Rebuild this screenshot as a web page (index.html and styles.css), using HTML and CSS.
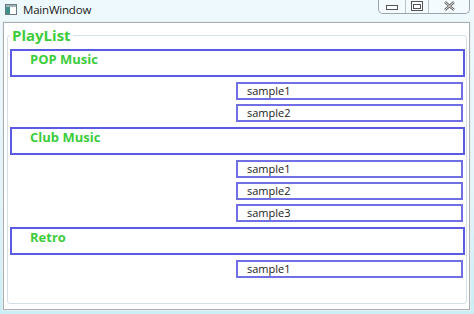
FILE: index.html
```html
<!DOCTYPE html>
<html>
<head>
<meta charset="utf-8">
<link rel="stylesheet" href="styles.css">
</head>
<body>
<div class="window">
  <div class="titlebar">
    <svg class="app-icon" width="12" height="11" viewBox="0 0 12 11">
      <rect x="0.5" y="0.5" width="11" height="10" fill="#fff" stroke="#6c7a80"/>
      <rect x="1" y="1" width="4" height="9" fill="#3f8f8a"/>
      <rect x="1" y="1" width="10" height="2" fill="#9fb4bd"/>
    </svg>
    <span class="title">MainWindow</span>
    <div class="caption-buttons">
      <div class="cb cb-min"><svg width="12" height="6" viewBox="0 0 12 6"><rect x="0.5" y="0.5" width="11" height="4" fill="#fff" stroke="#555"/></svg></div>
      <div class="cb cb-max"><svg width="12" height="10" viewBox="0 0 12 10"><rect x="0.5" y="0.5" width="11" height="9" fill="#fff" stroke="#555"/><rect x="2.5" y="3.5" width="7" height="4" fill="#fff" stroke="#555"/></svg></div>
      <div class="cb cb-close"><svg width="11" height="10" viewBox="0 0 11 10"><path d="M1 1 L10 9 M10 1 L1 9" stroke="#666" stroke-width="2.4" fill="none"/><path d="M1 1 L10 9 M10 1 L1 9" stroke="#fff" stroke-width="0.8" fill="none"/></svg></div>
    </div>
  </div>
  <div class="client">
    <fieldset class="group">
      <legend class="group-title">PlayList</legend>
      <div class="category">
        <div class="cat-header">POP Music</div>
        <div class="sample">sample1</div>
        <div class="sample">sample2</div>
      </div>
      <div class="category">
        <div class="cat-header">Club Music</div>
        <div class="sample">sample1</div>
        <div class="sample">sample2</div>
        <div class="sample">sample3</div>
      </div>
      <div class="category">
        <div class="cat-header">Retro</div>
        <div class="sample">sample1</div>
      </div>
    </fieldset>
  </div>
</div>
</body>
</html>
```
FILE: styles.css
```css
html, body {
  margin: 0;
  padding: 0;
}
body {
  width: 474px;
  height: 314px;
  overflow: hidden;
  background: linear-gradient(180deg, #eef9fd 0%, #e4f5fb 60%, #c9eef5 100%);
  font-family: "Open Sans", "Noto Sans", sans-serif;
}
.window {
  display: flex;
  flex-direction: column;
  height: 314px;
}
.titlebar {
  height: 22px;
  flex: none;
  display: flex;
  align-items: center;
  padding-left: 5px;
  box-sizing: border-box;
  position: relative;
}
.app-icon {
  margin-top: -3px;
}
.title {
  margin-left: 6px;
  margin-top: -3px;
  font-size: 11.5px;
  color: #1a1a1a;
  letter-spacing: -0.2px;
}
.caption-buttons {
  position: absolute;
  top: -1px;
  right: 4px;
  height: 15px;
  width: 92px;
  display: flex;
  border: 1px solid #9aa6ad;
  border-top: none;
  border-radius: 0 0 5px 5px;
  background: rgba(255,255,255,0.35);
  box-sizing: border-box;
}
.cb {
  display: flex;
  align-items: center;
  justify-content: center;
}
.cb-min { width: 26px; padding-top: 4px; }
.cb-max { width: 22px; border-left: 1px solid #b6c2c8; border-right: 1px solid #b6c2c8; }
.cb-close { flex: 1; }
.client {
  flex: 1;
  margin: 0 4px 4px 3px;
  border: 1px solid #a8b0b4;
  background: #fff;
  display: flex;
  flex-direction: column;
  box-shadow: 0 0 0 1px #e9eef0;
}
.group {
  flex: 1;
  margin: 3px 2px 5px 3px;
  padding: 4px 1px 0 2px;
  border: 1px solid #d5dfe5;
  border-radius: 3px;
  min-width: 0;
}
.group-title {
  padding: 0 2px;
  margin-left: 0;
  font-size: 15px;
  line-height: 19px;
  font-weight: bold;
  color: #3ccc3c;
}
.category {
  display: flex;
  flex-direction: column;
  margin-bottom: 5px;
}
.cat-header {
  height: 28px;
  box-sizing: border-box;
  border: 2px solid #5a5ae2;
  padding: 0 0 0 18px;
  font-size: 13px;
  line-height: 17px;
  font-weight: bold;
  color: #3ccc3c;
  margin-bottom: 5px;
}
.sample {
  align-self: flex-end;
  width: 227px;
  height: 18px;
  box-sizing: border-box;
  margin-right: 2px;
  margin-bottom: 4px;
  border: 2px solid #7070e4;
  padding-left: 9px;
  font-size: 11px;
  line-height: 14px;
  color: #222;
}
.category .sample:last-child {
  margin-bottom: 0;
}
```
